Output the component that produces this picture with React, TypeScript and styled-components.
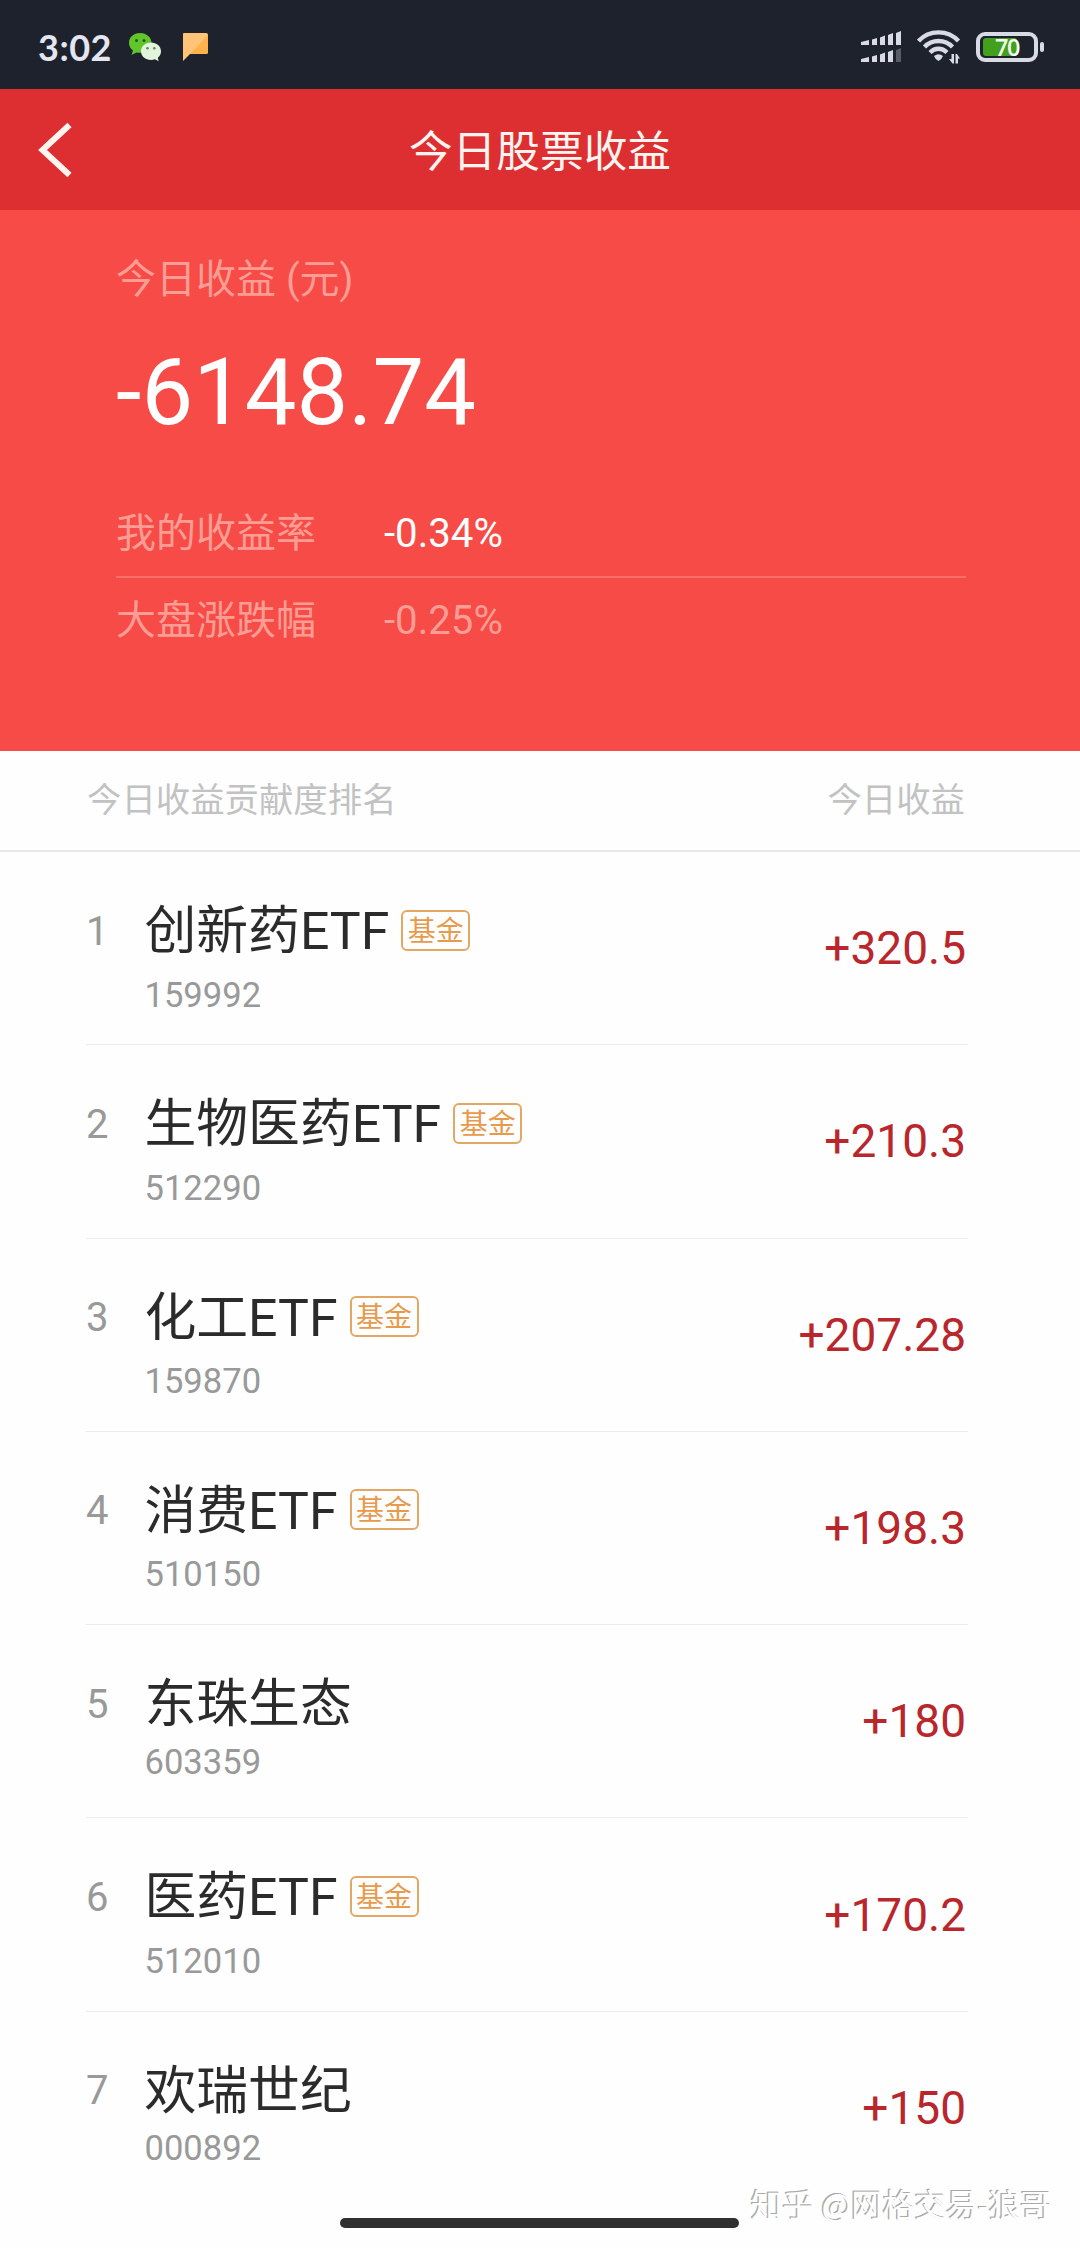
import React from "react";
import styled, { createGlobalStyle } from "styled-components";

const GlobalStyle = createGlobalStyle`
  * { box-sizing: border-box; }
  body {
    margin: 0;
    background: #fefefe;
    font-family: Roboto, "Noto Sans CJK SC", sans-serif;
  }
`;

const Screen = styled.div`
  position: relative;
  width: 1080px;
  height: 2248px;
  overflow: hidden;
  display: flex;
  flex-direction: column;
  background: #fefefe;
`;

const StatusBar = styled.header`
  height: 89px;
  flex: none;
  display: flex;
  align-items: center;
  justify-content: space-between;
  padding: 5px 36px 0 38px;
  background: #1e222d;
`;

const StatusGroup = styled.div`
  display: flex;
  align-items: center;
`;

const Clock = styled.span`
  width: 90px;
  font-family: Lato, sans-serif;
  font-weight: 700;
  font-size: 36px;
  line-height: 42px;
  letter-spacing: 0.5px;
  padding-bottom: 1px;
  color: #e4e6f2;
`;

const StatusIcon = styled.svg<{ $gap?: number }>`
  display: block;
  margin-left: ${(p) => p.$gap ?? 0}px;
`;

const Battery = styled.div`
  width: 62px;
  height: 30px;
  margin-left: 15px;
  border: 4px solid #d9dbe4;
  border-radius: 9px;
  padding: 2px 3px;
  display: grid;
`;

const BatteryFill = styled.div`
  grid-area: 1 / 1;
  width: 34px;
  height: 18px;
  border-radius: 3px;
  background: #43a01c;
`;

const BatteryLevel = styled.span`
  grid-area: 1 / 1;
  font-family: "Open Sans", sans-serif;
  font-weight: 600;
  font-size: 23.5px;
  line-height: 18px;
  letter-spacing: -1.4px;
  padding-left: 12px;
  color: #f2fff0;
`;

const BatteryTip = styled.div`
  width: 4px;
  height: 10px;
  margin-left: 2px;
  border-radius: 2px;
  background: #d9dbe4;
`;

const NavBar = styled.nav`
  height: 121px;
  flex: none;
  display: grid;
  grid-template-columns: 110px 1fr 110px;
  align-items: center;
  background: #dd2f31;
`;

const BackButton = styled.button`
  width: 110px;
  height: 121px;
  padding: 0 0 0 38px;
  border: 0;
  background: none;
  display: flex;
  align-items: center;
`;

const Title = styled.h1`
  margin: 0;
  padding-top: 5px;
  font-weight: 400;
  font-size: 43.7px;
  line-height: 60px;
  text-align: center;
  color: #fff4f0;
`;

const Summary = styled.section`
  height: 541px;
  flex: none;
  padding: 40px 114px 0 116px;
  background: #f64b47;
`;

const SummaryLabel = styled.div`
  font-size: 40px;
  line-height: 60px;
  color: #ff9d94;
`;

const Total = styled.div`
  margin-top: 29px;
  font-size: 92px;
  line-height: 108px;
  color: #ffffff;
`;

const Metric = styled.div<{ $divider?: boolean }>`
  height: 86px;
  display: flex;
  align-items: center;
  border-bottom: ${(p) => (p.$divider ? "2px solid #fb6d67" : "0")};
`;

const Metrics = styled.div`
  padding-top: 45px;
`;

const MetricLabel = styled.span`
  width: 268px;
  font-size: 40px;
  line-height: 60px;
  color: #ff9d94;
`;

const MetricValue = styled.span<{ $strong?: boolean }>`
  font-size: 40.2px;
  line-height: 60px;
  color: ${(p) => (p.$strong ? "#ffffff" : "#ff9d94")};
`;

const ListHeader = styled.div`
  height: 101px;
  flex: none;
  display: flex;
  align-items: center;
  justify-content: space-between;
  padding: 0 115px 1px 87px;
  border-bottom: 2px solid #e9e9e9;
  font-size: 34.4px;
  line-height: 50px;
  color: #c2c2c2;
`;

const List = styled.ol`
  margin: 0;
  padding: 0 112px 0 86px;
  list-style: none;
`;

const Row = styled.li<{ $last?: boolean }>`
  height: 193.3px;
  display: grid;
  grid-template-columns: 58.5px 1fr auto;
  padding-right: 2px;
  border-bottom: ${(p) => (p.$last ? "0" : "1px solid #ececec")};
`;

const Rank = styled.span`
  padding-top: 49.5px;
  font-size: 40px;
  line-height: 60px;
  color: #999999;
`;

const Security = styled.div`
  padding-top: 46px;
`;

const NameLine = styled.div`
  height: 64px;
  display: flex;
  align-items: center;
`;

const Name = styled.span`
  padding-top: 4px;
  font-size: 51.8px;
  line-height: 64px;
  color: #2b2b2b;
`;

const Tag = styled.span`
  width: 69px;
  height: 41px;
  margin-left: 12px;
  border: 2px solid #e3a765;
  border-radius: 6px;
  font-size: 28px;
  line-height: 39px;
  text-align: center;
  color: #e79a4c;
`;

const Code = styled.div<{ $tagged: boolean }>`
  margin-top: ${(p) => (p.$tagged ? 12.5 : 6.5)}px;
  font-size: 34.6px;
  line-height: 40px;
  color: #999999;
`;

const Amount = styled.span`
  align-self: center;
  font-size: 46px;
  line-height: 60px;
  color: #b9262b;
`;

const HomeIndicator = styled.div`
  position: absolute;
  left: 340px;
  top: 2218px;
  width: 399px;
  height: 10px;
  border-radius: 5px;
  background: #303030;
`;

const Watermark = styled.div`
  position: absolute;
  left: 751px;
  top: 2181px;
  font-family: "Noto Sans CJK SC", sans-serif;
  font-size: 31.4px;
  line-height: 46px;
  letter-spacing: 0.2px;
  white-space: nowrap;
  color: #ffffff;
  text-shadow: -1px -1px 0 #a9a9a9, -1.5px -1.5px 0.5px #b4b4b4;
`;

type Holding = { name: string; code: string; amount: string; fund: boolean };

const holdings: Holding[] = [
  { name: "创新药ETF", code: "159992", amount: "+320.5", fund: true },
  { name: "生物医药ETF", code: "512290", amount: "+210.3", fund: true },
  { name: "化工ETF", code: "159870", amount: "+207.28", fund: true },
  { name: "消费ETF", code: "510150", amount: "+198.3", fund: true },
  { name: "东珠生态", code: "603359", amount: "+180", fund: false },
  { name: "医药ETF", code: "512010", amount: "+170.2", fund: true },
  { name: "欢瑞世纪", code: "000892", amount: "+150", fund: false },
];

function WeChatIcon() {
  return (
    <StatusIcon width="34" height="30" viewBox="0 0 34 30">
      <path
        d="M12 1C5.4 1 1 5.4 1 11c0 3.200 1.500 5.700 4 7.600L3.500 23l5-2.600c5 1.600 14.500-1 15-9.400C23.500 5.400 18.600 1 12 1Z"
        fill="#62c52c"
      />
      <circle cx="8.500" cy="8.500" r="1.500" fill="#1f5c12" />
      <circle cx="16" cy="8.500" r="1.500" fill="#1f5c12" />
      <path
        d="M23 10.500c-5.600 0-10 3.700-10 8.700s4.400 8.700 10 8.700c1.500 0 2.700-.2 4-.7l3.600 2-.8-3.400c2-1.600 3.200-3.900 3.200-6.600 0-5-4.400-8.700-10-8.700Z"
        fill="#e2f5dc"
      />
      <circle cx="19.500" cy="16.300" r="1.300" fill="#5d8c58" />
      <circle cx="26.300" cy="16.300" r="1.300" fill="#5d8c58" />
    </StatusIcon>
  );
}

function MessageIcon() {
  return (
    <StatusIcon $gap={20} width="27" height="28" viewBox="0 0 27 28">
      <path d="M2 0H24Q26 0 26 2V19Q26 21 24 21H8L1 28V1Q1 0 2 0Z" fill="#ffc477" />
      <path d="M26 2V19Q26 21 24 21H8Z" fill="#ffb14b" />
    </StatusIcon>
  );
}

function SignalIcon() {
  return (
    <StatusIcon width="42" height="32" viewBox="0 0 42 32" fill="#d9dbe4">
      <path d="M1 11 9 9V14H1Z" />
      <path d="M12 8.500 17 7V14H12Z" />
      <path d="M20 6.500 25 4.500V14H20Z" />
      <path d="M28 4 33 2V14H28Z" />
      <path d="M36 2 41 0V14H36Z" />
      <path d="M1 28 9 26V31H1Z" />
      <path d="M12 25.500 17 24V31H12Z" />
      <path d="M20 23.500 25 21.500V31H20Z" />
      <path d="M28 21 33 19V31H28Z" />
      <path d="M36 19 41 17V31H36Z" fill="#5a5d66" />
    </StatusIcon>
  );
}

function WifiIcon() {
  return (
    <StatusIcon $gap={15} width="44" height="34" viewBox="0 0 44 34">
      <g fill="none" stroke="#d9dbe4" strokeWidth="4.300" strokeLinecap="butt">
        <path d="M1.500 11C12-.6 31-.6 41.500 11" />
        <path d="M7.500 17C15 9 28 9 35.500 17" />
        <path d="M13 22.500C18 17.500 25 17.500 30 22.500" />
      </g>
      <path d="M17 26Q21.500 22.500 26 26Q25 29 21.500 31Q18 29 17 26Z" fill="#d9dbe4" />
      <g fill="#d9dbe4">
        <path d="M34.500 24H37V33.500H35.500L32 29H34.500Z" />
        <path d="M38.500 24H40L43 28.500H41V33.500H38.500Z" />
      </g>
    </StatusIcon>
  );
}

export default function App() {
  return (
    <Screen>
      <GlobalStyle />
      <StatusBar>
        <StatusGroup>
          <Clock>3:02</Clock>
          <WeChatIcon />
          <MessageIcon />
        </StatusGroup>
        <StatusGroup>
          <SignalIcon />
          <WifiIcon />
          <Battery>
            <BatteryFill />
            <BatteryLevel>70</BatteryLevel>
          </Battery>
          <BatteryTip />
        </StatusGroup>
      </StatusBar>

      <NavBar>
        <BackButton aria-label="返回">
          <svg width="36" height="58" viewBox="0 0 36 58" fill="none">
            <path d="M31.500 4 4.500 29 31.500 54" stroke="#fff4ee" strokeWidth="6" />
          </svg>
        </BackButton>
        <Title>今日股票收益</Title>
      </NavBar>

      <Summary>
        <SummaryLabel>今日收益 (元)</SummaryLabel>
        <Total>-6148.74</Total>
        <Metrics>
          <Metric $divider>
            <MetricLabel>我的收益率</MetricLabel>
            <MetricValue $strong>-0.34%</MetricValue>
          </Metric>
          <Metric>
            <MetricLabel>大盘涨跌幅</MetricLabel>
            <MetricValue>-0.25%</MetricValue>
          </Metric>
        </Metrics>
      </Summary>

      <ListHeader>
        <span>今日收益贡献度排名</span>
        <span>今日收益</span>
      </ListHeader>
      <List>
        {holdings.map((h, i) => (
          <Row key={h.code} $last={i === holdings.length - 1}>
            <Rank>{i + 1}</Rank>
            <Security>
              <NameLine>
                <Name>{h.name}</Name>
                {h.fund && <Tag>基金</Tag>}
              </NameLine>
              <Code $tagged={h.fund}>{h.code}</Code>
            </Security>
            <Amount>{h.amount}</Amount>
          </Row>
        ))}
      </List>

      <HomeIndicator />
      <Watermark>知乎 @网格交易-狼哥</Watermark>
    </Screen>
  );
}
